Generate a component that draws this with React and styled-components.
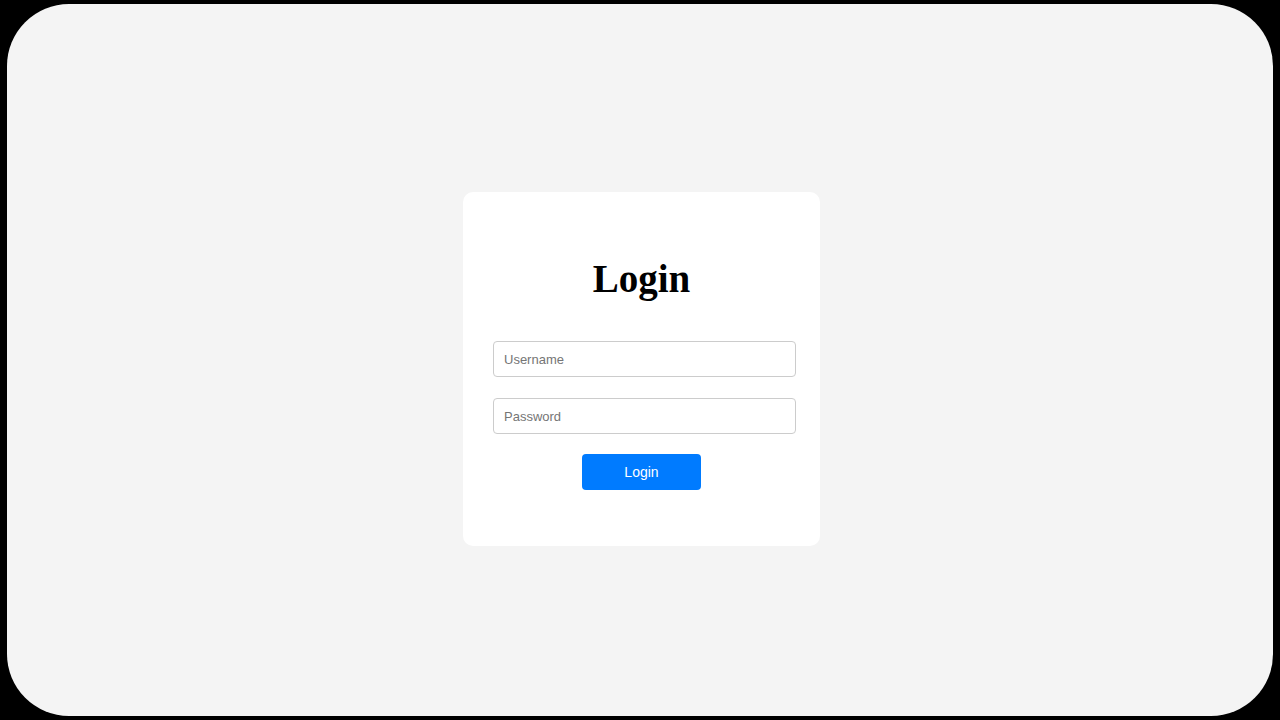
import React from 'react';
import styled, { createGlobalStyle } from 'styled-components';

const GlobalStyle = createGlobalStyle`
  html, body {
    margin: 0;
    padding: 0;
    background: #000;
  }
  * {
    box-sizing: border-box;
  }
`;

const Screen = styled.div`
  width: 1280px;
  height: 720px;
  padding: 4px 7px;
  background: #000;
`;

const Page = styled.div`
  height: 712px;
  border-radius: 62px;
  background: #f4f4f4;
  display: flex;
  justify-content: center;
  align-items: flex-start;
  padding-top: 188px;
  padding-left: 3px;
`;

const Card = styled.form`
  width: 357px;
  background: #fff;
  border-radius: 10px;
  padding: 24px 24px 56px 30px;
  display: flex;
  flex-direction: column;
  align-items: stretch;
`;

const Title = styled.h1`
  margin: 41px 0 41px -6px;
  font-family: 'Liberation Serif', 'Times New Roman', serif;
  font-weight: 700;
  font-size: 39px;
  line-height: 43px;
  text-align: center;
  color: #000;
`;

const Input = styled.input`
  height: 36px;
  width: 100%;
  margin-bottom: ${({ $last }) => ($last ? '20px' : '21px')};
  padding: 0 10px;
  border: 1px solid #cccccc;
  border-radius: 4px;
  font-family: 'Liberation Sans', Arial, sans-serif;
  font-size: 13px;
  color: #333;
  background: #fff;
  outline: none;

  &::placeholder {
    color: #757575;
  }
`;

const Button = styled.button`
  align-self: center;
  margin-left: -6px;
  width: 119px;
  height: 36px;
  border: none;
  border-radius: 4px;
  background: #007bff;
  color: #fff;
  font-family: 'Liberation Sans', Arial, sans-serif;
  font-size: 14px;
  cursor: pointer;
`;

const App = () => {
  return (
    <>
      <GlobalStyle />
      <Screen>
        <Page>
          <Card onSubmit={(e) => e.preventDefault()}>
            <Title>Login</Title>
            <Input type="text" placeholder="Username" />
            <Input type="password" placeholder="Password" $last />
            <Button type="submit">Login</Button>
          </Card>
        </Page>
      </Screen>
    </>
  );
};

export default App;
